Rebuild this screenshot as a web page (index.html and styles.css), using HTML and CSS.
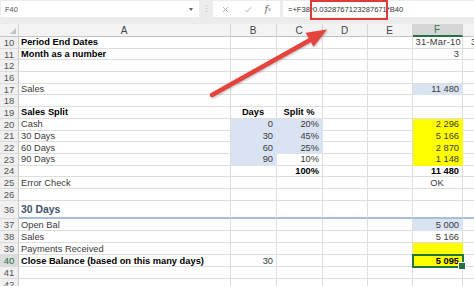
FILE: index.html
```html
<!DOCTYPE html>
<html>
<head>
<meta charset="utf-8">
<link rel="stylesheet" href="styles.css">
</head>
<body>
<div class="topbar">
  <div class="namebox"><span>F40</span><span class="dd"></span></div>
  <div class="sep">⋮</div>
  <div class="fxbox">
    <span class="ico"><svg width="7" height="7" viewBox="0 0 7 7"><path d="M1 1L6 6M6 1L1 6" stroke="#b5b5b5" stroke-width="1" fill="none"/></svg></span>
    <span class="ico"><svg width="8" height="7" viewBox="0 0 8 7"><path d="M1 3.8L3 5.8L7 1.2" stroke="#b5b5b5" stroke-width="1" fill="none"/></svg></span>
    <span class="ico fx"><i>f</i><sub>x</sub></span>
  </div>
  <div class="formula">=+F38*0.0328767123287671*B40</div>
</div>

<div class="sheet">
  <div class="row hdr"><div class="rh corner"><span class="tri"></span></div><div>A</div><div>B</div><div>C</div><div>D</div><div>E</div><div class="sel">F</div><div>G</div><div></div></div>
  <div class="row"><div class="rh">10</div><div class="b">Period End Dates</div><div></div><div></div><div></div><div></div><div class="r date">31-Mar-10</div><div class="r date">30-Apr-10</div><div></div></div>
  <div class="row"><div class="rh">11</div><div class="b">Month as a number</div><div></div><div></div><div></div><div></div><div class="r">3</div><div></div><div></div></div>
  <div class="row"><div class="rh">12</div><div></div><div></div><div></div><div></div><div></div><div></div><div></div><div></div></div>
  <div class="row"><div class="rh">16</div><div></div><div></div><div></div><div></div><div></div><div></div><div></div><div></div></div>
  <div class="row"><div class="rh">17</div><div>Sales</div><div></div><div></div><div></div><div></div><div class="r blue">11 480</div><div></div><div></div></div>
  <div class="row"><div class="rh">18</div><div></div><div></div><div></div><div></div><div></div><div></div><div></div><div></div></div>
  <div class="row"><div class="rh">19</div><div class="b">Sales Split</div><div class="b c">Days</div><div class="b c">Split %</div><div></div><div></div><div></div><div></div><div></div></div>
  <div class="row"><div class="rh">20</div><div>Cash</div><div class="r blue">0</div><div class="r blue">20%</div><div></div><div></div><div class="r yel">2 296</div><div></div><div></div></div>
  <div class="row"><div class="rh">21</div><div>30 Days</div><div class="r blue">30</div><div class="r blue">45%</div><div></div><div></div><div class="r yel">5 166</div><div></div><div></div></div>
  <div class="row"><div class="rh">22</div><div>60 Days</div><div class="r blue">60</div><div class="r blue">25%</div><div></div><div></div><div class="r yel">2 870</div><div></div><div></div></div>
  <div class="row"><div class="rh">23</div><div>90 Days</div><div class="r blue">90</div><div class="r">10%</div><div></div><div></div><div class="r yel">1 148</div><div></div><div></div></div>
  <div class="row"><div class="rh">24</div><div></div><div></div><div class="r b">100%</div><div></div><div></div><div class="r b">11 480</div><div></div><div></div></div>
  <div class="row"><div class="rh">25</div><div>Error Check</div><div></div><div></div><div></div><div></div><div class="c">OK</div><div></div><div></div></div>
  <div class="row"><div class="rh">26</div><div></div><div></div><div></div><div></div><div></div><div></div><div></div><div></div></div>
  <div class="row head3"><div class="rh">36</div><div class="h3">30 Days</div><div></div><div></div><div></div><div></div><div></div><div></div><div></div></div>
  <div class="row tall"><div class="rh">37</div><div>Open Bal</div><div></div><div></div><div></div><div></div><div class="r blue">5 000</div><div></div><div></div></div>
  <div class="row tall"><div class="rh">38</div><div>Sales</div><div></div><div></div><div></div><div></div><div class="r">5 166</div><div></div><div></div></div>
  <div class="row tall"><div class="rh">39</div><div>Payments Received</div><div></div><div></div><div></div><div></div><div class="yel"></div><div></div><div></div></div>
  <div class="row tall"><div class="rh selrow">40</div><div class="b">Close Balance (based on this many days)</div><div class="r">30</div><div></div><div></div><div></div><div class="r b yel active">5 095</div><div></div><div></div></div>
  <div class="row tall"><div class="rh">41</div><div></div><div></div><div></div><div></div><div></div><div></div><div></div><div></div></div>
  <div class="row tall"><div class="rh">42</div><div></div><div></div><div></div><div></div><div></div><div></div><div></div><div></div></div>
</div>

<svg class="overlay" width="474" height="286" viewBox="0 0 474 286">
  <rect x="311" y="1" width="76" height="18" fill="none" stroke="#de3c37" stroke-width="2"/>
  <g class="arrow">
    <line x1="212" y1="95" x2="311" y2="39.5" stroke="#e4443c" stroke-width="4.5" stroke-linecap="round"/>
    <polygon points="327,29.5 313.5,46.8 305.7,32.8" fill="#e4443c"/>
  </g>
</svg>
</body>
</html>
```

FILE: styles.css
```css
* { box-sizing: border-box; margin: 0; padding: 0; }
html, body { width: 474px; height: 286px; overflow: hidden; background: #fff; }
body { font-family: "Liberation Sans", Arial, sans-serif; position: relative; }

.topbar {
  height: 24px;
  background: #ececec;
  display: flex;
  align-items: flex-start;
  padding-top: 1px;
  width: 474px;
}
.namebox {
  margin-left: 1px;
  width: 198px;
  height: 16px;
  background: #fff;
  display: flex;
  align-items: center;
  justify-content: space-between;
  padding: 0 6px 0 4px;
  font-size: 7.5px;
  color: #555;
}
.dd {
  width: 0; height: 0;
  border-left: 2.5px solid transparent;
  border-right: 2.5px solid transparent;
  border-top: 3px solid #666;
}
.sep {
  width: 14px;
  height: 16px;
  display: flex;
  align-items: center;
  justify-content: center;
  color: #bbb;
  font-size: 9px;
}
.fxbox {
  width: 67px;
  height: 16px;
  background: #fff;
  display: grid;
  grid-template-columns: 24px 22px 18px;
  align-items: center;
}
.ico { display: flex; justify-content: center; align-items: center; }
.fx { font-family: "DejaVu Serif", serif; color: #555; font-size: 8.5px; }
.fx sub { font-size: 5.5px; font-style: italic; }
.formula {
  flex: 1;
  margin-left: 3px;
  height: 16px;
  background: #fff;
  font-size: 7.6px;
  padding-left: 5px;
  display: flex;
  align-items: center;
  color: #333;
  white-space: nowrap;
}

.sheet { width: 474px; }
.row {
  display: grid;
  grid-template-columns: 19px 212px 46px 46px 45px 45px 50px 54px 50px;
  height: 11.7px;
  font-size: 9.3px;
  color: #3a3a3a;
}
.row.tall { height: 12px; }
.row.head3 { height: 18.8px; }
.row > div {
  border-right: 1px solid #dedede;
  border-bottom: 1px solid #dedede;
  padding: 0 3px 0 2px;
  white-space: nowrap;
  overflow: hidden;
  display: flex;
  align-items: center;
}
.row > .date { padding-right: 1px; letter-spacing: 0.3px; }
.row > .rh {
  background: #f0f0f0;
  color: #555;
  font-size: 9.5px;
  justify-content: center;
  padding: 0;
  border-right: 1px solid #c8c8c8;
  border-bottom: 1px solid #dcdcdc;
}
.row.hdr { height: 13px; }
.row.hdr > div {
  background: #f3f3f3;
  color: #444;
  font-size: 10px;
  justify-content: center;
  border-right: 1px solid #d4d4d4;
  border-bottom: 1px solid #c4c4c4;
}
.row.hdr > .sel {
  background: #d6d6d6;
  color: #3d7456;
  border-bottom: 2px solid #217346;
}
.corner { position: relative; }
.tri {
  position: absolute;
  right: 2px;
  bottom: 2px;
  width: 0; height: 0;
  border-left: 6px solid transparent;
  border-bottom: 6px solid #c2c2c2;
}
.row > .selrow { background: #dcdcdc; color: #217346; }

.b { font-weight: bold; color: #000; }
.r { justify-content: flex-end; }
.c { justify-content: center; }
.row > .blue { background: #dae3f2; border-color: #dae3f2; }
.row > .yel { background: #ffff00; border-color: #ffff00; }

.row.head3 > div:not(.rh) { border-bottom: 2px solid #a9bedb; }
.h3 { font-weight: bold; color: #44546a; font-size: 10.4px; }

.row > .active {
  position: relative;
  overflow: visible;
  outline: 2px solid #217346;
  outline-offset: -1px;
  z-index: 2;
}
.active::after {
  content: "";
  position: absolute;
  right: -4px;
  bottom: -4px;
  width: 6px;
  height: 6px;
  background: #217346;
  border: 1px solid #fff;
}

.overlay {
  position: absolute;
  left: 0;
  top: 0;
  pointer-events: none;
}
.arrow { filter: drop-shadow(1px 1px 1px rgba(0,0,0,0.25)); }
```
